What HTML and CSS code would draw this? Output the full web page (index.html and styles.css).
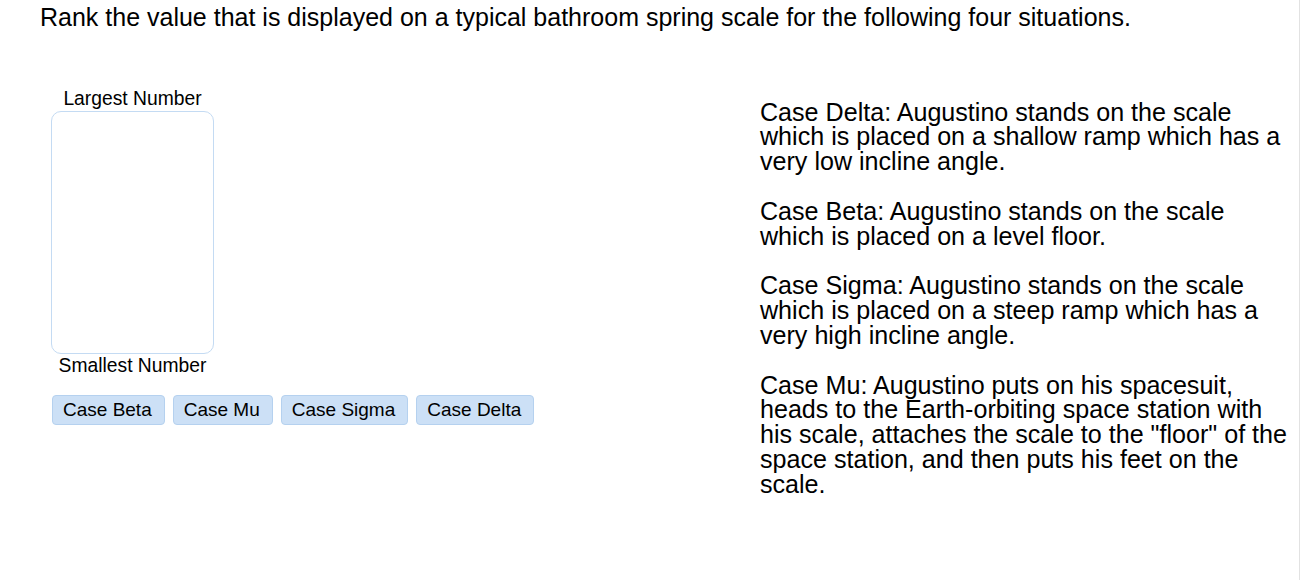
FILE: index.html
```html
<!DOCTYPE html>
<html lang="en">
<head>
<meta charset="utf-8">
<title>Ranking</title>
<link rel="stylesheet" href="styles.css">
</head>
<body>
<div class="page">
  <p class="prompt">Rank the value that is displayed on a typical bathroom spring scale for the following four situations.</p>
  <div class="main">
    <div class="left">
      <div class="ranker">
        <div class="rank-label">Largest Number</div>
        <div class="drop-box"></div>
        <div class="rank-label">Smallest Number</div>
      </div>
      <div class="chips">
        <span class="chip">Case Beta</span>
        <span class="chip">Case Mu</span>
        <span class="chip">Case Sigma</span>
        <span class="chip">Case Delta</span>
      </div>
    </div>
    <div class="right">
      <p class="case">Case Delta: Augustino stands on the scale which is placed on a shallow ramp which has a very low incline angle.</p>
      <p class="case">Case Beta: Augustino stands on the scale which is placed on a level floor.</p>
      <p class="case">Case Sigma: Augustino stands on the scale which is placed on a steep ramp which has a very high incline angle.</p>
      <p class="case">Case Mu: Augustino puts on his spacesuit, heads to the Earth-orbiting space station with his scale, attaches the scale to the "floor" of the space station, and then puts his feet on the scale.</p>
    </div>
  </div>
</div>
</body>
</html>
```
FILE: styles.css
```css
html, body {
  margin: 0;
  padding: 0;
  background: #ffffff;
}

body {
  font-family: "Liberation Sans", Arial, sans-serif;
  color: #000000;
}

.page {
  width: 1300px;
  height: 580px;
  border-right: 1px solid #e2e2e2;
  box-sizing: border-box;
}

.prompt {
  margin: 0;
  padding: 3px 0 0 40px;
  font-size: 25px;
  line-height: 29px;
}

.main {
  display: flex;
  margin-top: 56px;
  padding-left: 51px;
}

.left {
  width: 709px;
  display: flex;
  flex-direction: column;
  align-items: flex-start;
}

.ranker {
  width: 163px;
  display: flex;
  flex-direction: column;
  align-items: center;
}

.rank-label {
  font-size: 19.3px;
  line-height: 22px;
  white-space: nowrap;
}

.drop-box {
  width: 163px;
  height: 243px;
  margin: 1px 0 1px;
  box-sizing: border-box;
  border: 1px solid #c4dbf3;
  border-radius: 10px;
}

.chips {
  display: flex;
  gap: 8px;
  margin-top: 18px;
  padding-left: 1px;
}

.chip {
  display: block;
  height: 30px;
  line-height: 28px;
  padding: 0 12px 0 10px;
  box-sizing: border-box;
  font-size: 19px;
  background: #cce0f6;
  border: 1px solid #b5d1ef;
  border-radius: 4px;
  white-space: nowrap;
}

.right {
  width: 530px;
  padding-top: 11.5px;
}

.case {
  margin: 0 0 25px;
  font-size: 25.1px;
  line-height: 24.75px;
}
```
